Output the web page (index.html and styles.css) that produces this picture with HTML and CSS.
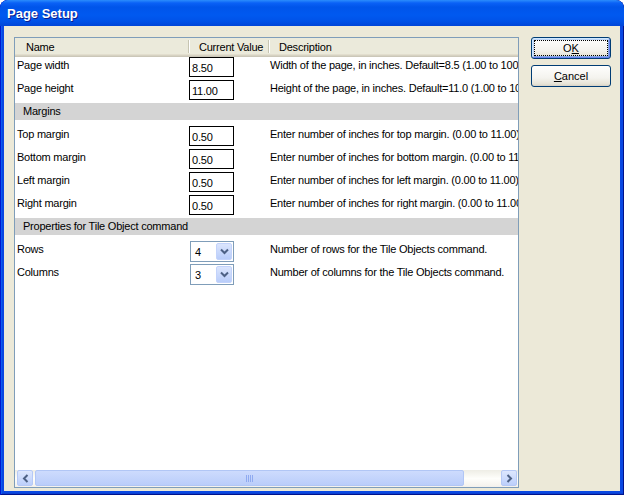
FILE: index.html
```html
<!DOCTYPE html>
<html lang="en">
<head>
  <meta charset="UTF-8">
  <title>Page Setup</title>
  <link rel="stylesheet" href="styles.css">
</head>
<body>
  <div class="window">
    <div class="titlebar"><span class="title">Page Setup</span></div>
    <div class="client">
      <div class="grid-panel">
        <div class="grid-head">
          <div class="head-col head-name">Name</div>
          <span class="divider"></span>
          <div class="head-col head-value">Current Value</div>
          <span class="divider"></span>
          <div class="head-col head-desc">Description</div>
        </div>

        <div class="grid-body">
          <div class="row">
            <div class="cell-name">Page width</div>
            <div class="cell-value"><div class="text-box">8.50</div></div>
            <div class="cell-desc">Width of the page, in inches. Default=8.5 (1.00 to 100.00)</div>
          </div>
          <div class="row">
            <div class="cell-name">Page height</div>
            <div class="cell-value"><div class="text-box">11.00</div></div>
            <div class="cell-desc">Height of the page, in inches. Default=11.0 (1.00 to 100.00)</div>
          </div>

          <div class="section">Margins</div>
          <div class="row">
            <div class="cell-name">Top margin</div>
            <div class="cell-value"><div class="text-box">0.50</div></div>
            <div class="cell-desc">Enter number of inches for top margin. (0.00 to 11.00)</div>
          </div>
          <div class="row">
            <div class="cell-name">Bottom margin</div>
            <div class="cell-value"><div class="text-box">0.50</div></div>
            <div class="cell-desc">Enter number of inches for bottom margin. (0.00 to 11.00)</div>
          </div>
          <div class="row">
            <div class="cell-name">Left margin</div>
            <div class="cell-value"><div class="text-box">0.50</div></div>
            <div class="cell-desc">Enter number of inches for left margin. (0.00 to 11.00)</div>
          </div>
          <div class="row">
            <div class="cell-name">Right margin</div>
            <div class="cell-value"><div class="text-box">0.50</div></div>
            <div class="cell-desc">Enter number of inches for right margin. (0.00 to 11.00)</div>
          </div>

          <div class="section">Properties for Tile Object command</div>
          <div class="row">
            <div class="cell-name">Rows</div>
            <div class="cell-value">
              <div class="combo">
                <span class="combo-text">4</span>
                <span class="combo-btn">
                  <svg width="9" height="7" viewBox="0 0 9 7"><path d="M1 1.5 L4.5 5 L8 1.5" fill="none" stroke="#4d6185" stroke-width="2"/></svg>
                </span>
              </div>
            </div>
            <div class="cell-desc">Number of rows for the Tile Objects command.</div>
          </div>
          <div class="row">
            <div class="cell-name">Columns</div>
            <div class="cell-value">
              <div class="combo">
                <span class="combo-text">3</span>
                <span class="combo-btn">
                  <svg width="9" height="7" viewBox="0 0 9 7"><path d="M1 1.5 L4.5 5 L8 1.5" fill="none" stroke="#4d6185" stroke-width="2"/></svg>
                </span>
              </div>
            </div>
            <div class="cell-desc">Number of columns for the Tile Objects command.</div>
          </div>
        </div>

        <div class="hscroll">
          <span class="sb-btn">
            <svg width="7" height="9" viewBox="0 0 7 9"><path d="M5.5 1 L2 4.5 L5.5 8" fill="none" stroke="#4d6185" stroke-width="2"/></svg>
          </span>
          <span class="sb-thumb">
            <svg width="8" height="7" viewBox="0 0 8 7"><path d="M0.5 0 V7 M2.5 0 V7 M4.5 0 V7 M6.5 0 V7" stroke="#8faaf0" stroke-width="1"/></svg>
          </span>
          <span class="sb-track"></span>
          <span class="sb-btn">
            <svg width="7" height="9" viewBox="0 0 7 9"><path d="M1.5 1 L5 4.5 L1.5 8" fill="none" stroke="#4d6185" stroke-width="2"/></svg>
          </span>
        </div>
      </div>

      <div class="buttons">
        <button class="btn btn-default"><span class="btn-focus">O<u>K</u></span></button>
        <button class="btn"><span class="btn-inner"><u>C</u>ancel</span></button>
      </div>
    </div>
  </div>
</body>
</html>
```

FILE: styles.css
```css
* {
  box-sizing: border-box;
}
body {
  margin: 0;
  font-family: "Liberation Sans", Arial, sans-serif;
  font-size: 11px;
  letter-spacing: -0.22px;
  color: #000;
  background: #fff;
}
.window {
  width: 624px;
  height: 495px;
  display: flex;
  flex-direction: column;
  padding: 0 4px 4px;
  background: #0a48e2;
  border-radius: 8px 8px 0 0;
  box-shadow: inset 1px 0 #0019cf, inset -1px 0 #00138c, inset 0 -1px #00138c, inset 2px 0 #0d5cf0, inset 0 -2px #0a3fd0;
  overflow: hidden;
}
.titlebar {
  height: 26px;
  margin: 0 -4px;
  padding: 6px 0 0 7px;
  background: linear-gradient(#2b8dfc 0, #0a61f6 3px, #0055ea 7px, #0059f0 15px, #0052e8 21px, #0146d8 26px);
  border-radius: 8px 8px 0 0;
}
.title {
  color: #fff;
  font-weight: bold;
  font-size: 13px;
  letter-spacing: 0;
  text-shadow: 1px 1px #0c1c8c;
}
.client {
  flex: 1;
  display: flex;
  gap: 12px;
  padding: 11px 9px 0 10px;
  background: #ece9d8;
}

/* property grid */
.grid-panel {
  width: 505px;
  height: 451px;
  display: flex;
  flex-direction: column;
  border: 1px solid #7f9db9;
  background: #fff;
  overflow: hidden;
}
.grid-head {
  height: 19px;
  flex: none;
  display: flex;
  align-items: center;
  background: #ebeadb;
  box-shadow: inset 0 -1px #cbc7b8, inset 0 -2px #d6d2c2, inset 0 -3px #e2dece;
}
.head-col {
  padding-bottom: 2px;
  white-space: nowrap;
}
.head-name {
  width: 173px;
  padding-left: 11px;
}
.head-value {
  width: 78px;
  padding-left: 9px;
}
.head-desc {
  padding-left: 9px;
}
.divider {
  width: 2px;
  height: 13px;
  margin-bottom: 2px;
  border-left: 1px solid #c7c5b2;
  border-right: 1px solid #fff;
}
.grid-body {
  flex: 1;
}
.row {
  display: flex;
  height: 23px;
}
.cell-name {
  width: 174px;
  flex: none;
  padding: 2px 0 0 2px;
}
.cell-value {
  width: 81px;
  flex: none;
}
.cell-desc {
  padding-top: 2px;
  white-space: nowrap;
}
.text-box {
  width: 45px;
  height: 20px;
  border: 1px solid #000;
  padding: 4px 0 0 2px;
}
.section {
  height: 17px;
  margin-bottom: 6px;
  padding: 2px 0 0 8px;
  background: #d4d4d4;
}
.combo {
  width: 44px;
  height: 21px;
  margin-left: 1px;
  display: flex;
  border: 1px solid #7f9db9;
}
.combo-text {
  flex: 1;
  padding: 4px 0 0 4px;
}
.combo-btn {
  width: 16px;
  margin: 1px;
  display: flex;
  align-items: center;
  justify-content: center;
  border-radius: 2px;
  background: linear-gradient(#dbe5fd, #b9cdfa);
  border: 1px solid #c3d3fb;
}

/* horizontal scroll bar */
.hscroll {
  height: 17px;
  flex: none;
  display: flex;
  padding: 0 1px 1px 2px;
  background: linear-gradient(#eeede5, #fefefb 50%, #f3f1ec);
}
.sb-btn {
  width: 16px;
  display: flex;
  align-items: center;
  justify-content: center;
  border: 1px solid #b6c9f6;
  border-radius: 2px;
  background: linear-gradient(#dde7fe, #bccffb);
}
.sb-thumb {
  width: 429px;
  margin-left: 2px;
  display: flex;
  align-items: center;
  justify-content: center;
  border: 1px solid #b1c6f5;
  border-radius: 2px;
  background: linear-gradient(#cddbfd, #bacdfa);
}
.sb-track {
  flex: 1;
}

/* buttons */
.buttons {
  display: flex;
  flex-direction: column;
  gap: 6px;
}
.btn {
  width: 80px;
  height: 22px;
  padding: 0;
  display: flex;
  font-family: "Liberation Sans", Arial, sans-serif;
  font-size: 11px;
  color: #000;
  border: 1px solid #003c74;
  border-radius: 3px;
  background: linear-gradient(#fefefd, #f4f3ee 60%, #e6e3d6 90%, #d6d0c5);
}
.btn-default {
  box-shadow: inset 1px 1px #cee7ff, inset -1px -1px #6982ee, inset 2px 2px #bcd4f6, inset -2px -2px #89ade4;
}
.btn-focus,
.btn-inner {
  flex: 1;
  margin: 2px;
  display: flex;
  align-items: center;
  justify-content: center;
}
.btn-focus {
  border: 1px dotted #000;
}
.btn-inner {
  border: 1px solid transparent;
}
```
